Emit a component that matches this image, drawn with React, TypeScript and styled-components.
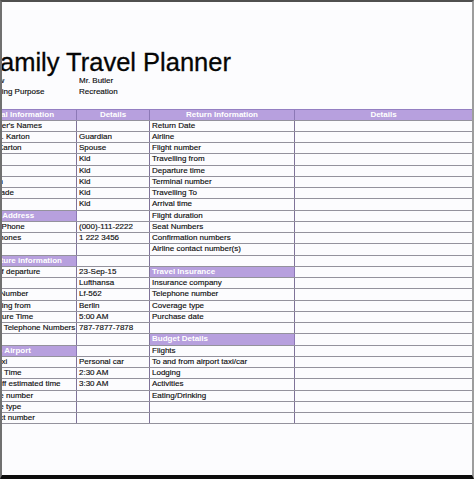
import React from 'react';
import styled, { createGlobalStyle, css } from 'styled-components';

// sheet is scrolled a little to the right, so column A starts off-screen
const ROW_H = 11.26;
const PURPLE = '#b7a0de';

type Section = { text: string; section: true };
type Spec = string | Section;

const S = (text: string): Section => ({ text, section: true });

const infoRows = [
  ['Review', 'Mr. Butler'],
  ['Travelling Purpose', 'Recreation'],
];

const rows: Spec[][] = [
  ["Traveller's Names", '', 'Return Date'],
  ['John J. Karton', 'Guardian', 'Airline'],
  ['Mary Karton', 'Spouse', 'Flight number'],
  ['Jack', 'Kid', 'Travelling from'],
  ['Amy', 'Kid', 'Departure time'],
  ['Steven', 'Kid', 'Terminal number'],
  ['Tim Wade', 'Kid', 'Travelling To'],
  ['Lily', 'Kid', 'Arrival time'],
  [S('Home Address'), '', 'Flight duration'],
  ['Home Phone', '(000)-111-2222', 'Seat Numbers'],
  ['Cell Phones', '1 222 3456', 'Confirmation numbers'],
  ['', '', 'Airline contact number(s)'],
  [S('Departure information'), '', ''],
  ['Date of departure', '23-Sep-15', S('Travel Insurance')],
  ['Airline', 'Lufthansa', 'Insurance company'],
  ['Flight Number', 'Lf-562', 'Telephone number'],
  ['Travelling from', 'Berlin', 'Coverage type'],
  ['Departure Time', '5:00 AM', 'Purchase date'],
  ['Airport Telephone Numbers', '787-7877-7878', ''],
  ['', '', S('Budget Details')],
  [S('Trip to Airport'), '', 'Flights'],
  ['Car/Taxi', 'Personal car', 'To and from airport taxi/car'],
  ['Pickup Time', '2:30 AM', 'Lodging'],
  ['Drop off estimated time', '3:30 AM', 'Activities'],
  ['Vehicle number', '', 'Eating/Drinking'],
  ['Vehicle type', '', ''],
  ['Contact number', '', ''],
];

const GlobalStyle = createGlobalStyle`
  html, body {
    margin: 0;
    padding: 0;
    background: #fcfcfe;
  }
  body {
    font-family: "Liberation Sans", Arial, sans-serif;
    overflow: hidden;
  }
`;

const Frame = styled.div`
  width: 474px;
  height: 479px;
  box-sizing: border-box;
  border-top: 2px solid #4f4f4f;
  border-left: 2px solid #707070;
  border-right: 2px solid #9d9d9d;
  border-bottom: 4px solid #0c0c0c;
  background: #fcfcfe;
  overflow: hidden;
`;

const Sheet = styled.div`
  width: 499px;
  margin-left: -29px;
  color: #0e0e0e;
  font-size: 8px;
  -webkit-text-stroke: 0.15px #0e0e0e;
`;

const Title = styled.h1`
  margin: 0;
  height: 73.5px;
  box-sizing: border-box;
  display: flex;
  align-items: flex-end;
  padding: 0 0 0.5px 11.4px;
  font-size: 25.5px;
  font-weight: 400;
  line-height: 1;
  color: #050505;
  -webkit-text-stroke: 0.3px #050505;
  white-space: nowrap;
`;

const Row = styled.div<{ $ruled?: boolean; $head?: boolean }>`
  display: grid;
  grid-template-columns: 104px 73px 145px 177px;
  height: ${ROW_H}px;
  box-sizing: border-box;
  ${(p) => p.$ruled && css`border-bottom: 1px solid #94929d;`}
  ${(p) => p.$head && css`border-top: 1px solid #947fc2;`}
`;

const Cell = styled.div<{ $fill?: boolean; $line?: boolean; $center?: boolean; $indent?: number }>`
  display: flex;
  align-items: center;
  justify-content: ${(p) => (p.$center ? 'center' : 'flex-start')};
  min-width: 0;
  overflow: hidden;
  white-space: nowrap;
  box-sizing: border-box;
  padding: 0 2px 0 ${(p) => p.$indent ?? 2}px;
  border-right: ${(p) => (p.$line ? `1px solid ${p.$fill ? '#8c78b6' : '#7f7399'}` : 'none')};
  background: ${(p) => (p.$fill ? PURPLE : 'transparent')};
  color: ${(p) => (p.$fill ? '#ffffff' : 'inherit')};
  -webkit-text-stroke: ${(p) => (p.$fill ? '0' : '0.15px #0e0e0e')};
  font-weight: ${(p) => (p.$fill ? 700 : 400)};
  line-height: 1;
`;

const headers = ['Personal Information', 'Details', 'Return Information', 'Details'];

function cellOf(spec: Spec, col: number) {
  const section = typeof spec !== 'string';
  const text = typeof spec === 'string' ? spec : spec.text;
  return (
    <Cell key={col} $fill={section} $line={col < 3} $indent={col === 0 ? 5 : 2}>
      {text}
    </Cell>
  );
}

export default function App() {
  return (
    <>
      <GlobalStyle />
      <Frame>
        <Sheet>
          <Title>Family Travel Planner</Title>
          {infoRows.map(([label, value]) => (
            <Row key={label}>
              <Cell $indent={5}>{label}</Cell>
              <Cell>{value}</Cell>
            </Row>
          ))}
          <Row />
          <Row $ruled $head>
            {headers.map((h, i) => (
              <Cell key={i} $fill $line={i < 3} $center={i > 0} $indent={i === 0 ? 1 : 2}>
                {h}
              </Cell>
            ))}
          </Row>
          {rows.map((r, i) => (
            <Row key={i} $ruled>
              {r.map((spec, col) => cellOf(spec, col))}
              <Cell />
            </Row>
          ))}
        </Sheet>
      </Frame>
    </>
  );
}
